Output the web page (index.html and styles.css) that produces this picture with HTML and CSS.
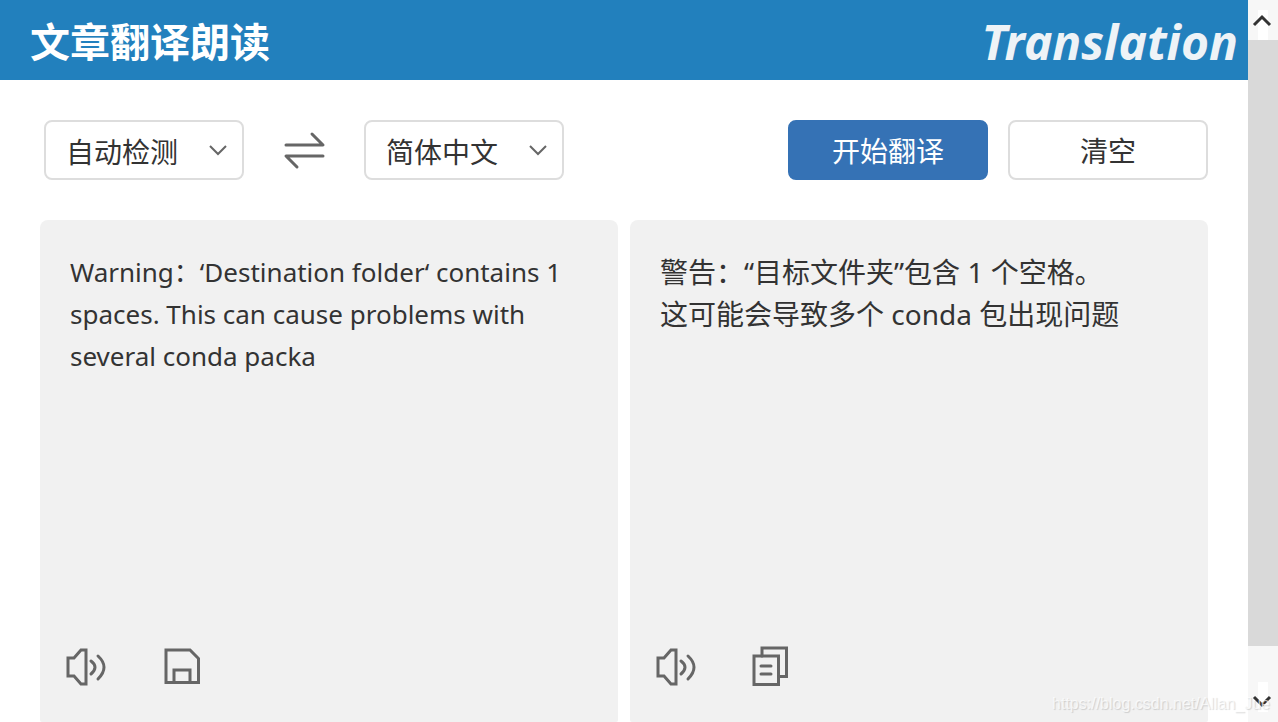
FILE: index.html
```html
<!DOCTYPE html>
<html lang="zh-CN">
<head>
  <meta charset="UTF-8">
  <meta name="viewport" content="width=device-width, initial-scale=1.0">
  <title>文章翻译朗读</title>

  <link rel="stylesheet" href="styles.css">
</head>
<body>

  <div class="page">
    <header class="header">
      <h1>文章翻译朗读</h1>
      <span class="brand">Translation</span>
    </header>

    <main>
      <section class="toolbar">
        <div class="select-box">
          <select id="from" aria-label="源语言">
            <option>自动检测</option>
            <option>简体中文</option>
            <option>英语</option>
          </select>
          <svg class="chevron" viewBox="0 0 20 12"><path d="M2 2l8 8 8-8"/></svg>
        </div>

        <button class="icon-btn swap" type="button" aria-label="交换语言">
          <svg class="icon" viewBox="0 0 44 40"><path d="M30 4l11 11H4M41 26H4l11 11"/></svg>
        </button>

        <div class="select-box">
          <select id="to" aria-label="目标语言">
            <option>简体中文</option>
            <option>英语</option>
          </select>
          <svg class="chevron" viewBox="0 0 20 12"><path d="M2 2l8 8 8-8"/></svg>
        </div>

        <div class="actions">
          <button class="btn btn-primary" type="button">开始翻译</button>
          <button class="btn" type="button">清空</button>
        </div>
      </section>

      <section class="panels">
        <div class="panel">
          <textarea class="source" aria-label="原文" spellcheck="false">Warning：‘Destination folder‘ contains 1 spaces. This can cause problems with several conda packa</textarea>
          <div class="tools">
            <button class="icon-btn" type="button" aria-label="朗读">
              <svg class="icon" viewBox="0 0 40 40"><path d="M2 12h6l7-8h5v34h-5l-7-8H2z"/><path d="M25 15q8 6 0 13M32 10q12 11 0 23"/></svg>
            </button>
            <button class="icon-btn" type="button" aria-label="保存">
              <svg class="icon" viewBox="0 0 40 40"><path d="M4 4h24l8.500 8.500V36.500H4z"/><path d="M12 36V24h16v12"/></svg>
            </button>
          </div>
        </div>

        <div class="panel">
          <textarea class="result" aria-label="译文" readonly>警告：“目标文件夹”包含 1 个空格。
这可能会导致多个 conda 包出现问题</textarea>
          <div class="tools">
            <button class="icon-btn" type="button" aria-label="朗读">
              <svg class="icon" viewBox="0 0 40 40"><path d="M2 12h6l7-8h5v34h-5l-7-8H2z"/><path d="M25 15q8 6 0 13M32 10q12 11 0 23"/></svg>
            </button>
            <button class="icon-btn" type="button" aria-label="复制">
              <svg class="icon" viewBox="0 0 40 40"><path d="M2 10h24.500v28.500H2z"/><path d="M10 10V2h24.500v28.500h-8M9 20h10M9 28h10"/></svg>
            </button>
          </div>
        </div>
      </section>
    </main>
  </div>

  <div class="scrollbar">
    <button class="scroll-btn" type="button" aria-label="向上滚动">
      <svg viewBox="0 0 30 40"><path d="M6 25l8-8 8 8"/></svg>
    </button>
    <div class="track"><div class="thumb"></div></div>
    <button class="scroll-btn scroll-down" type="button" aria-label="向下滚动">
      <svg viewBox="0 0 30 40"><path d="M6 15l8 8 8-8"/></svg>
    </button>
  </div>

  <span class="watermark">https://blog.csdn.net/Allan_Jue</span>

</body>
</html>
```
FILE: styles.css
```css
* {
  box-sizing: border-box;
}

body {
  display: flex;
  height: 100vh;
  margin: 0;
  overflow: hidden;
  background-color: #fff;
  color: #333;
  font-family: "Noto Sans", "Noto Sans CJK SC", sans-serif;
}

button,
select,
textarea {
  font-family: inherit;
  color: inherit;
}

.page {
  flex: 1;
  display: flex;
  flex-direction: column;
}

/* header */
.header {
  display: flex;
  justify-content: space-between;
  align-items: center;
  height: 80px;
  padding: 0 10px 0 30px;
  background-color: #2280bd;
  color: #fff;
}

h1 {
  margin: 0;
  font-size: 40px;
  line-height: 60px;
  font-family: "Noto Sans CJK SC", sans-serif;
}

.brand {
  padding-top: 4px;
  font-size: 48px;
  line-height: 60px;
  font-weight: bold;
  font-style: italic;
  color: #eef3f7;
}

main {
  flex: 1;
  display: flex;
  flex-direction: column;
  padding: 40px 40px 0;
}

/* language selects and buttons */
.toolbar {
  display: flex;
  align-items: center;
  padding-left: 4px;
  margin-bottom: 40px;
}

.select-box {
  position: relative;
  width: 200px;
}

select {
  appearance: none;
  display: block;
  width: 100%;
  height: 60px;
  padding: 2px 48px 0 20px;
  border: 2px solid #ddd;
  border-radius: 8px;
  background-color: #fff;
  font-family: "Noto Sans CJK SC", sans-serif;
  font-size: 28px;
}

.chevron {
  position: absolute;
  right: 16px;
  top: 24px;
  width: 20px;
  height: 12px;
  fill: none;
  stroke: #666;
  stroke-width: 2;
  pointer-events: none;
}

.icon-btn {
  display: block;
  padding: 0;
  border: none;
  background: none;
  cursor: pointer;
}

.icon {
  display: block;
  width: 40px;
  height: 40px;
  fill: none;
  stroke: #666;
  stroke-width: 3;
  stroke-linecap: round;
}

.swap {
  margin: 0 38px;
}

.swap .icon {
  width: 44px;
  stroke-linejoin: round;
}

.actions {
  display: flex;
  gap: 20px;
  margin-left: auto;
}

.btn {
  width: 200px;
  height: 60px;
  padding: 0;
  border: 2px solid #ddd;
  border-radius: 8px;
  background-color: #fff;
  font-family: "Noto Sans CJK SC", sans-serif;
  font-size: 28px;
  cursor: pointer;
}

.btn-primary {
  border-color: #3572b5;
  background-color: #3572b5;
  color: #fff;
}

/* text panels */
.panels {
  flex: 1;
  display: flex;
  gap: 12px;
}

.panel {
  flex: 1;
  display: flex;
  flex-direction: column;
  border-radius: 8px 8px 2px 2px;
  background-color: #f1f1f1;
}

textarea {
  flex: 1;
  width: 100%;
  padding: 31px 30px 0;
  border: none;
  outline: none;
  resize: none;
  background: none;
  font-size: 28px;
  line-height: 42px;
}

.source {
  font-size: 26px;
}

.tools {
  display: flex;
  gap: 56px;
  padding: 0 26px 36px;
}

/* scrollbar */
.scrollbar {
  display: flex;
  flex-direction: column;
  width: 30px;
  background-color: #f7f7f7;
}

.scroll-btn {
  height: 40px;
  padding: 0;
  border: none;
  background: linear-gradient(#fff, #fff) 10px 10px / 10px 30px no-repeat;
}

.scroll-down {
  background-position: 10px 0;
}

.scroll-btn svg {
  display: block;
  width: 30px;
  height: 40px;
  fill: none;
  stroke: #333;
  stroke-width: 3;
}

.track {
  flex: 1;
}

.thumb {
  height: 94.4%;
  background-color: #d9d9d9;
}

.watermark {
  position: absolute;
  right: 8px;
  bottom: 8px;
  font-family: "Liberation Sans", sans-serif;
  font-size: 16px;
  line-height: 20px;
  color: rgba(255, 255, 255, 0.7);
  text-shadow: 1px 1px 1px rgba(0, 0, 0, 0.15);
}
```
